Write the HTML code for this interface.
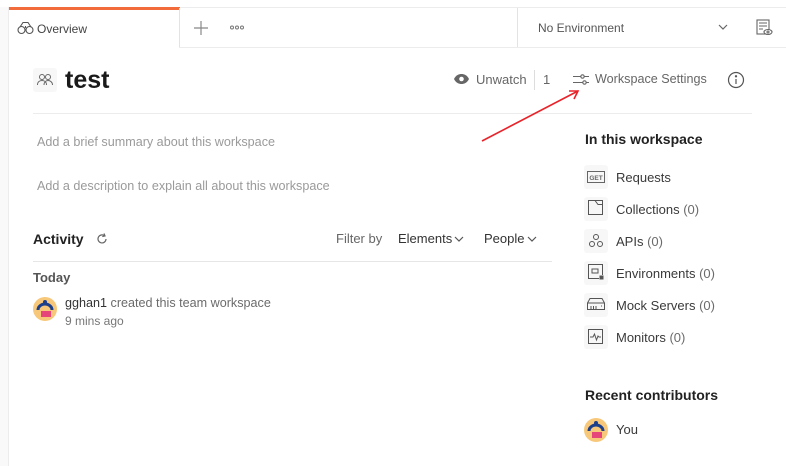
<!DOCTYPE html>
<html><head><meta charset="utf-8"><style>
*{box-sizing:border-box;margin:0;padding:0}
body{width:786px;height:466px;overflow:hidden;background:#fff;font-family:"Liberation Sans",sans-serif;color:#505050;font-size:13px;position:relative}
.a{position:absolute;white-space:nowrap}
.ic{position:absolute;width:24px;height:24px;background:#f7f7f7;border-radius:3px}
.lbl{color:#3a3a3a}
.muted{color:#6b6b6b}
</style></head><body>
<div class="a" style="left:0;top:7px;width:9px;height:459px;background:#f9f9f9;border-right:1px solid #ececec"></div>
<div class="a" style="left:9px;top:7px;width:777px;height:1px;background:#ececec"></div>
<div class="a" style="left:179px;top:47px;width:607px;height:1px;background:#ececec"></div>
<div class="a" style="left:9px;top:7px;width:171px;height:3px;background:#f26b3a"></div>
<div class="a" style="left:179px;top:8px;width:1px;height:39px;background:#e3e3e3"></div>
<div class="a" style="left:517px;top:8px;width:1px;height:39px;background:#e3e3e3"></div>
<svg class="a" style="left:17px;top:21px" width="17" height="14" viewBox="0 0 17 14" fill="none" stroke="#555" stroke-width="1.1"><circle cx="4.5" cy="9" r="3.5"/><circle cx="12.5" cy="9" r="3.5"/><path d="M3 6 L6 1.5 H11 L14 6 M8.5 5 V7"/></svg>
<div class="a" style="left:37px;top:22px;color:#444;font-size:12px">Overview</div>
<svg class="a" style="left:194px;top:21px" width="14" height="14"><path d="M7 0V14M0 7H14" stroke="#888" stroke-width="1.2"/></svg>
<svg class="a" style="left:230px;top:25px" width="14" height="5" fill="none" stroke="#777"><circle cx="2" cy="2.5" r="1.5"/><circle cx="7" cy="2.5" r="1.5"/><circle cx="12" cy="2.5" r="1.5"/></svg>
<div class="a" style="left:538px;top:21px;color:#555;font-size:12px">No Environment</div>
<svg class="a" style="left:718px;top:24px" width="10" height="6"><path d="M1 1 L5 5 L9 1" fill="none" stroke="#666" stroke-width="1.2"/></svg>
<svg class="a" style="left:756px;top:19px" width="17" height="18" fill="none" stroke="#666" stroke-width="1.1"><rect x="1" y="1" width="12" height="14"/><path d="M3 4h8M3 7h8M3 10h4"/><ellipse cx="12" cy="13" rx="4" ry="2.5" fill="#fff"/><circle cx="12" cy="13" r="1"/></svg>

<div class="ic" style="left:33px;top:68px"></div>
<svg class="a" style="left:36px;top:71px" width="18" height="18" fill="none" stroke="#666" stroke-width="1"><circle cx="6" cy="6" r="2.5"/><circle cx="12" cy="6" r="2.5"/><path d="M1.5 14c0-3 2-4.5 4.5-4.5s4.5 1.5 4.5 4.5M8 14c0-3 2-4.5 4-4.5s4.5 1.5 4.5 4.5"/></svg>
<div class="a" style="left:65px;top:66px;font-size:25px;font-weight:bold;color:#1a1a1a">test</div>

<svg class="a" style="left:453px;top:73px" width="17" height="12"><path d="M1 6C3 2 6 1 8.5 1S14 2 16 6C14 10 11 11 8.5 11S3 10 1 6Z" fill="#666"/><circle cx="8.5" cy="6" r="2.3" fill="#fff"/></svg>
<div class="a" style="left:476px;top:72px;color:#666">Unwatch</div>
<div class="a" style="left:534px;top:70px;width:1px;height:20px;background:#ddd"></div>
<div class="a" style="left:543px;top:72px;color:#666">1</div>
<svg class="a" style="left:572px;top:73px" width="18" height="13" fill="none" stroke="#666" stroke-width="1.1"><path d="M1 3.5h8M12 3.5h5M1 9.5h10M14 9.5h3"/><circle cx="10.5" cy="3.5" r="1.7"/><circle cx="12.5" cy="9.5" r="1.7"/></svg>
<div class="a" style="left:595px;top:72px;color:#666;font-size:12.6px">Workspace Settings</div>
<svg class="a" style="left:727px;top:71px" width="18" height="18" fill="none" stroke="#555" stroke-width="1.2"><circle cx="9" cy="9" r="7.5"/><path d="M9 8v5"/><circle cx="9" cy="5.3" r=".6" fill="#555"/></svg>
<div class="a" style="left:33px;top:113px;width:719px;height:1px;background:#ececec"></div>
<svg class="a" style="left:478px;top:86px" width="105" height="60"><path d="M4 55 L100 5" stroke="#e8232a" stroke-width="1.6"/><path d="M91 5 L100 5 L96 13" stroke="#e8232a" stroke-width="1.6" fill="none"/></svg>

<div class="a" style="left:37px;top:135px;color:#9a9a9a;font-size:12.6px">Add a brief summary about this workspace</div>
<div class="a" style="left:37px;top:179px;color:#9a9a9a;font-size:12.6px">Add a description to explain all about this workspace</div>

<div class="a" style="left:33px;top:231px;font-size:14px;font-weight:bold;color:#222">Activity</div>
<svg class="a" style="left:96px;top:233px" width="12" height="12" fill="none" stroke="#666" stroke-width="1.2"><path d="M10 6A4 4 0 1 1 8.5 2.8"/><path d="M8 .5 L9 3 L6.3 3.6"/></svg>
<div class="a" style="left:336px;top:231px;color:#666">Filter by</div>
<div class="a" style="left:398px;top:231px;color:#333">Elements</div>
<svg class="a" style="left:454px;top:236px" width="10" height="6"><path d="M1 1 L5 5 L9 1" fill="none" stroke="#555" stroke-width="1.2"/></svg>
<div class="a" style="left:484px;top:231px;color:#333">People</div>
<svg class="a" style="left:527px;top:236px" width="10" height="6"><path d="M1 1 L5 5 L9 1" fill="none" stroke="#555" stroke-width="1.2"/></svg>
<div class="a" style="left:33px;top:261px;width:519px;height:1px;background:#e6e6e6"></div>
<div class="a" style="left:33px;top:270px;font-weight:bold;color:#555">Today</div>
<svg class="a" style="left:33px;top:297px" width="24" height="24"><circle cx="12" cy="12" r="12" fill="#f7c87a"/><path d="M5 13a7 6 0 0 1 14 0" fill="none" stroke="#1c3f8c" stroke-width="3"/><circle cx="12" cy="5" r="2" fill="#1c3f8c"/><rect x="8" y="14" width="10" height="6" fill="#e6457a"/></svg>
<div class="a" style="left:65px;top:296px;font-size:12.6px"><span style="color:#333">gghan1</span> <span class="muted">created this team workspace</span></div>
<div class="a" style="left:65px;top:314px;font-size:12px;color:#777">9 mins ago</div>

<div class="a" style="left:585px;top:131px;font-size:14px;font-weight:bold;color:#222">In this workspace</div>
<div class="ic" style="left:584px;top:165px"></div><svg class="a" style="left:587px;top:171px" width="18" height="12"><rect x=".5" y=".5" width="17" height="11" fill="none" stroke="#666"/><text x="9" y="9" font-size="6.5" font-weight="bold" text-anchor="middle" fill="#666" font-family="Liberation Sans">GET</text></svg>
<div class="a lbl" style="left:616px;top:170px">Requests</div>
<div class="ic" style="left:584px;top:197px"></div><svg class="a" style="left:588px;top:200px" width="16" height="16" fill="none" stroke="#555"><rect x=".5" y=".5" width="14" height="14"/><path d="M7 .5 L10 4.5 H14.5"/></svg>
<div class="a lbl" style="left:616px;top:202px">Collections <span class="muted">(0)</span></div>
<div class="ic" style="left:584px;top:229px"></div><svg class="a" style="left:588px;top:233px" width="16" height="16" fill="none" stroke="#555"><circle cx="8" cy="4" r="2.5"/><circle cx="4" cy="11" r="2.5"/><circle cx="12" cy="11" r="2.5"/></svg>
<div class="a lbl" style="left:616px;top:234px">APIs <span class="muted">(0)</span></div>
<div class="ic" style="left:584px;top:261px"></div><svg class="a" style="left:588px;top:264px" width="16" height="16" fill="none" stroke="#555"><path d="M14.5 11V.5H.5v14H11"/><rect x="4" y="5" width="6" height="4"/><rect x="12" y="12" width="3" height="3" fill="#555"/></svg>
<div class="a lbl" style="left:616px;top:266px">Environments <span class="muted">(0)</span></div>
<div class="ic" style="left:584px;top:293px"></div><svg class="a" style="left:587px;top:298px" width="18" height="12" fill="none" stroke="#555"><path d="M.5 11.5V5L3 .5H15L17.5 5v6.5zM.5 5H17.5M4 8v3M6.5 8v3M9 8v3M14 8h1"/></svg>
<div class="a lbl" style="left:616px;top:298px">Mock Servers <span class="muted">(0)</span></div>
<div class="ic" style="left:584px;top:325px"></div><svg class="a" style="left:588px;top:329px" width="16" height="16" fill="none" stroke="#555"><rect x=".5" y=".5" width="14" height="14"/><path d="M2 8H5L6.5 5 8.5 11 10 7 11 8H13"/></svg>
<div class="a lbl" style="left:616px;top:330px">Monitors <span class="muted">(0)</span></div>

<div class="a" style="left:585px;top:387px;font-size:14px;font-weight:bold;color:#222">Recent contributors</div>
<svg class="a" style="left:584px;top:418px" width="24" height="24"><circle cx="12" cy="12" r="12" fill="#f7c87a"/><path d="M5 13a7 6 0 0 1 14 0" fill="none" stroke="#1c3f8c" stroke-width="3"/><circle cx="12" cy="5" r="2" fill="#1c3f8c"/><rect x="8" y="14" width="10" height="6" fill="#e6457a"/></svg>
<div class="a lbl" style="left:616px;top:422px">You</div>
</body></html>
